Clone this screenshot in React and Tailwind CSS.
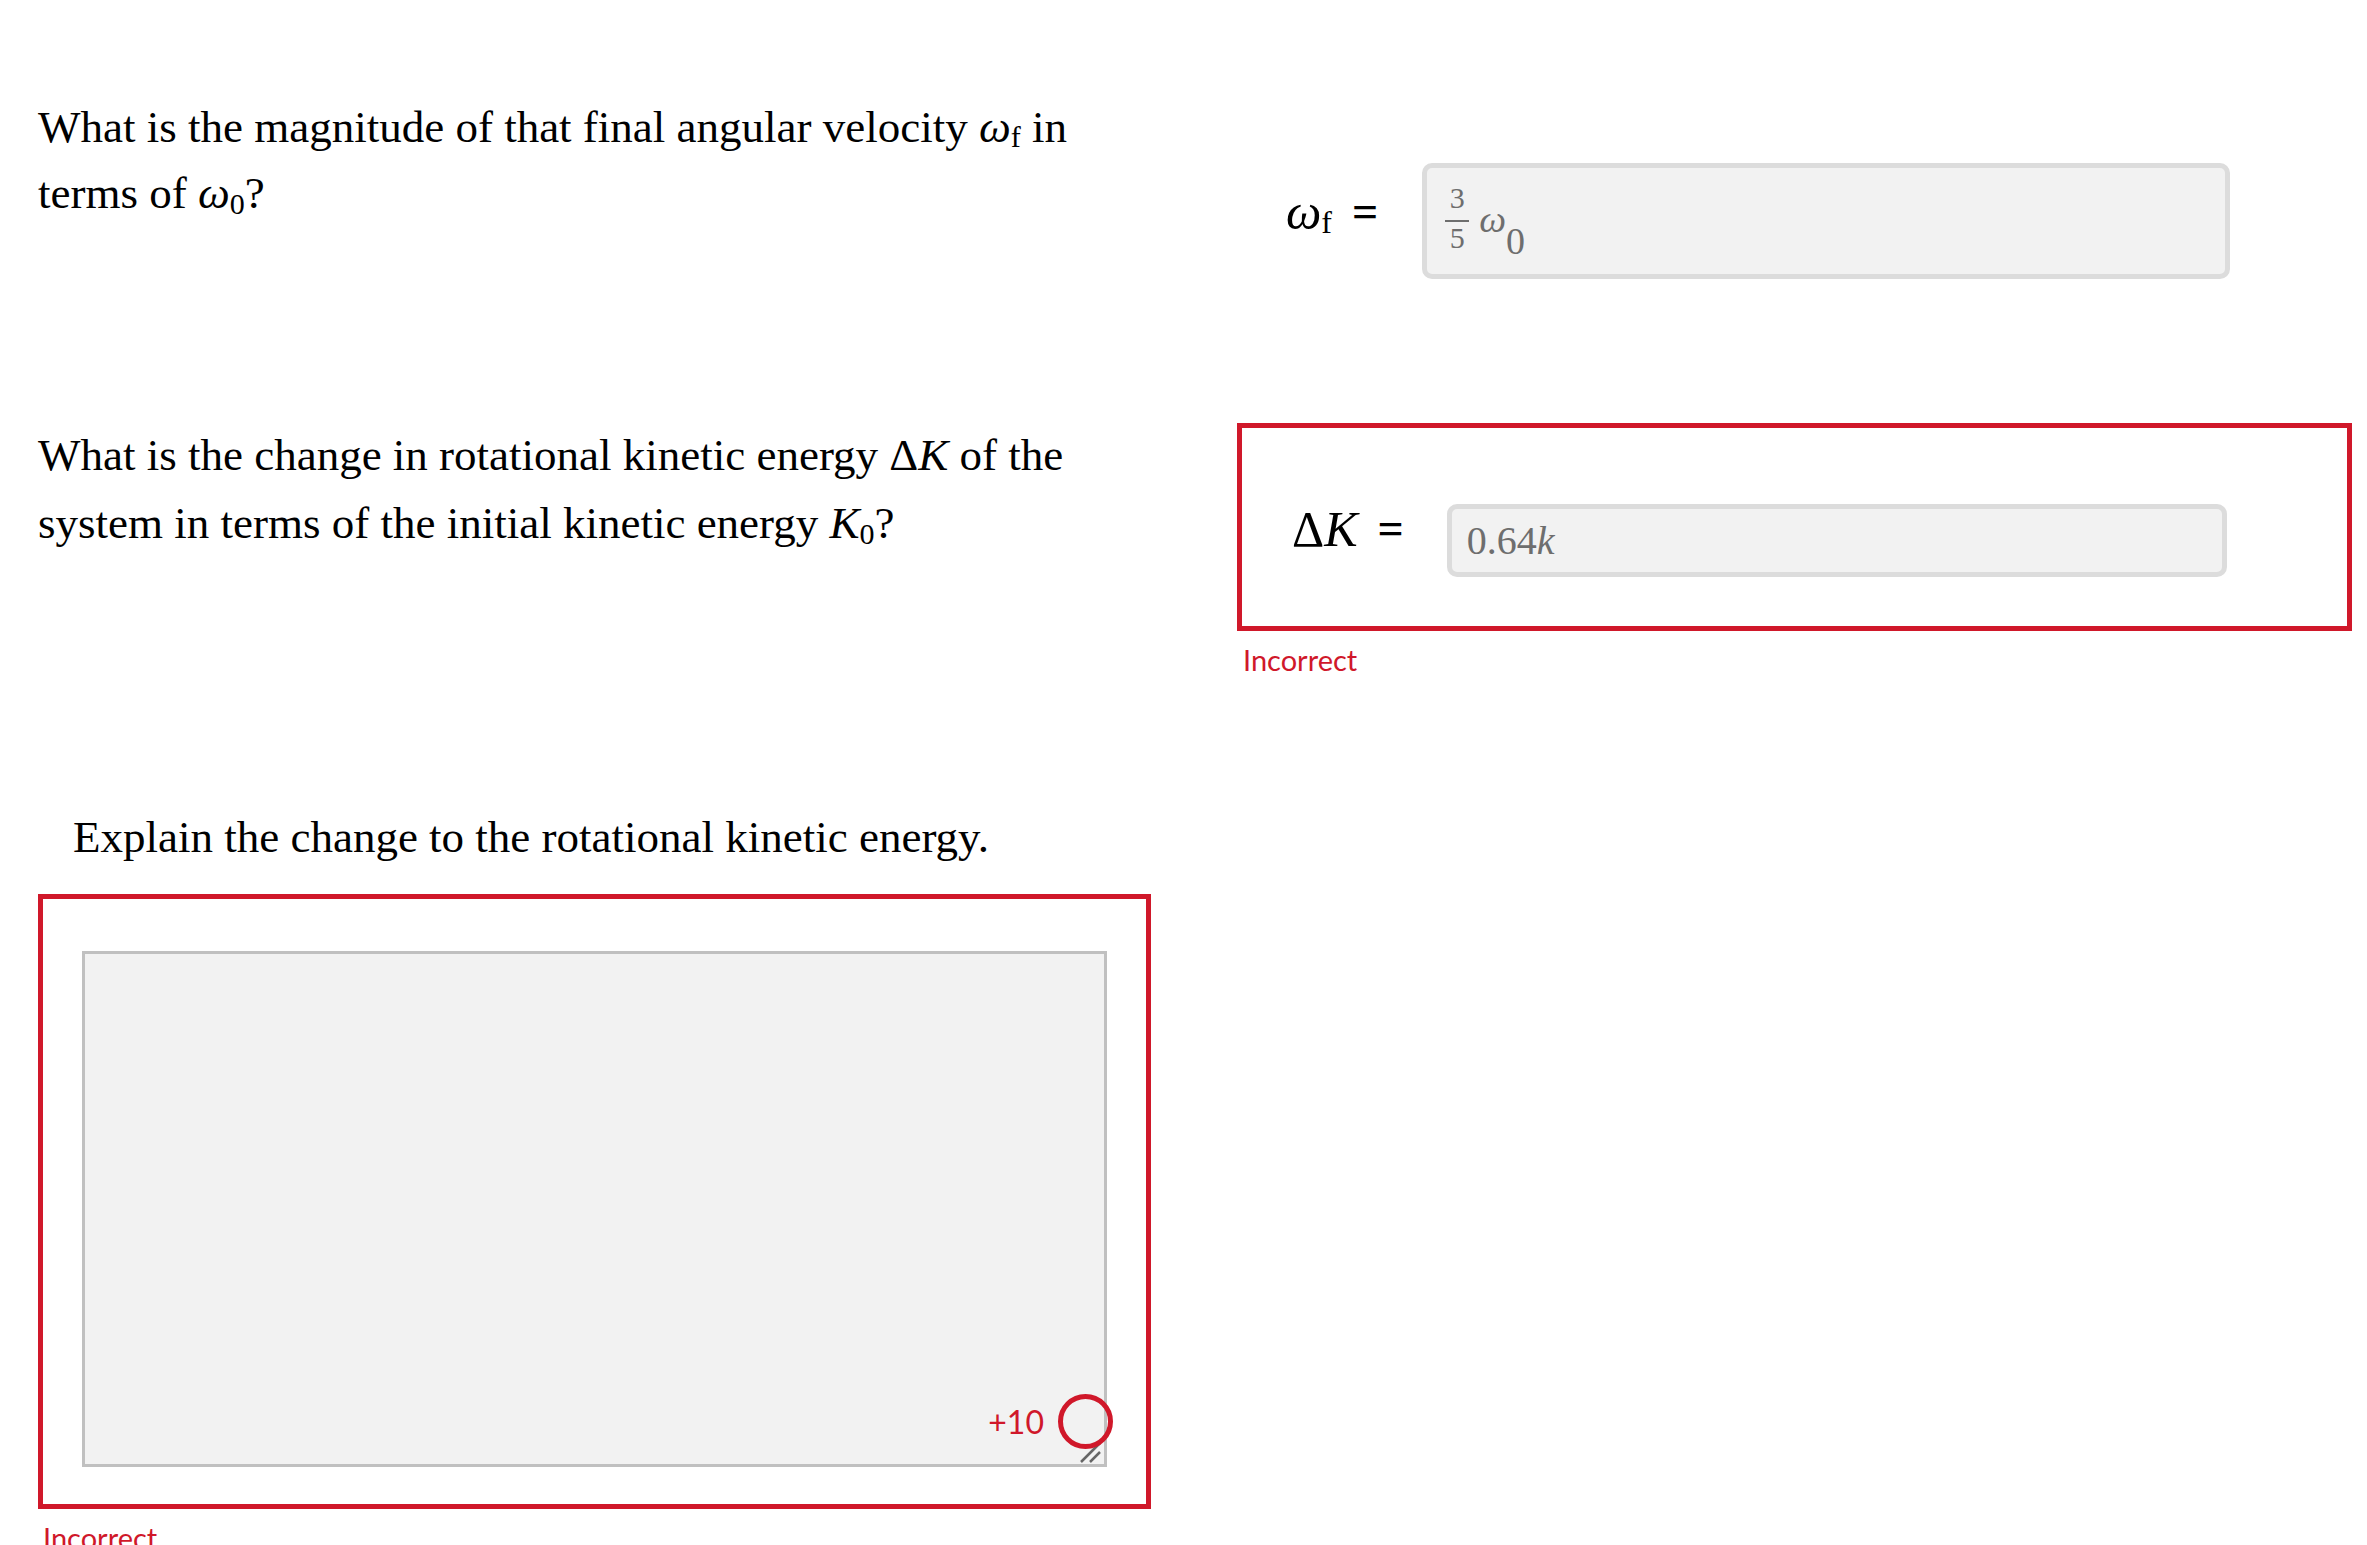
import React from 'react'

const RED = 'border-[#d0182a]'

function Incorrect({ className = '' }) {
    return (
        <div className={`mt-[11px] text-[29px] leading-[36px] text-[#d0182a] font-['Lato',sans-serif] ${className}`}>
            Incorrect
        </div>
    )
}

function MathLabel({ children }) {
    return (
        <div className="shrink-0 flex items-center gap-[20px] text-[50px] leading-none">
            {children}
            <span className="text-[46px] font-bold">=</span>
        </div>
    )
}

export default function App() {
    return (
        <div className="min-h-screen bg-white text-black font-['Liberation_Serif','Times_New_Roman',serif] pl-[38px] pt-[93px] pb-[40px]">
            {/* Question 1 */}
            <div className="flex items-start">
                <p className="w-[1199px] shrink-0 text-[45px] leading-[68px]">
                    What is the magnitude of that final angular velocity <i>ω</i><span className="text-[30px] leading-none relative top-[5px]">f</span> in
                    <br />
                    <span className="relative -top-[2px]">terms of <i>ω</i><span className="text-[30px] leading-none relative top-[6px]">0</span>?</span>
                </p>
                <div className="mt-[65px] w-[1115px] border-[5px] border-transparent pl-[44px] pr-[117px] flex items-center gap-[44px]">
                    <div className="-mt-[18px]">
                        <MathLabel>
                            <span><i>ω</i><span className="text-[32px] relative top-[4px]">f</span></span>
                        </MathLabel>
                    </div>
                    <div className="flex-1 h-[116px] rounded-[10px] border-[5px] border-[#dcdcdc] bg-[#f2f2f2] flex items-center pl-[18px] text-[#6e6e6e]">
                        <span className="inline-flex flex-col items-center text-[30px] leading-[32px] mb-[6px]">
                            <span className="pb-[6px]">3</span>
                            <span className="h-[2px] w-[24px] bg-[#6e6e6e]" />
                            <span>5</span>
                        </span>
                        <i className="text-[38px] ml-[10px] -mt-[4px]">ω</i>
                        <span className="text-[38px] mt-[40px]">0</span>
                    </div>
                </div>
            </div>

            {/* Question 2 */}
            <div className="flex items-start mt-[139px]">
                <p className="w-[1199px] shrink-0 text-[45px] leading-[68px] -mt-[2px]">
                    What is the change in rotational kinetic energy Δ<i>K</i> of the
                    <br />
                    system in terms of the initial kinetic energy <i>K</i><span className="text-[30px] leading-none relative top-[6px]">0</span>?
                </p>
                <div>
                    <div className={`w-[1115px] h-[208px] border-[5px] ${RED} pl-[50px] pr-[120px] pt-[76px] flex items-start gap-[43px]`}>
                        <MathLabel>
                            <span>Δ<i>K</i></span>
                        </MathLabel>
                        <div className="flex-1 h-[73px] rounded-[10px] border-[5px] border-[#dcdcdc] bg-[#f2f2f2] flex items-center pl-[15px] text-[40px] text-[#6e6e6e]">
                            <span>0.64<i>k</i></span>
                        </div>
                    </div>
                    <Incorrect className="pl-[6px]" />
                </div>
            </div>

            {/* Explain */}
            <p className="mt-[125px] pl-[35px] text-[45px] leading-[68px]">
                Explain the change to the rotational kinetic energy.
            </p>
            <div className={`mt-[23px] w-[1113px] h-[615px] border-[5px] ${RED} pl-[39px] pt-[52px]`}>
                <div className="relative w-[1025px] h-[516px] border-[3px] border-[#c0c0c0] bg-[#f2f2f2]">
                    <svg className="absolute right-[3px] bottom-[1px]" width="22" height="22" viewBox="0 0 22 22">
                        <line x1="2" y1="21" x2="21" y2="2" stroke="#666" strokeWidth="2.5" />
                        <line x1="11" y1="21" x2="21" y2="11" stroke="#666" strokeWidth="2.5" />
                    </svg>
                    <div className="absolute right-[-9px] bottom-[15px] flex items-center gap-[14px]">
                        <span className="text-[32px] leading-none text-[#d0182a] font-['Lato',sans-serif]">+10</span>
                        <span className={`w-[55px] h-[55px] rounded-full border-[5px] ${RED}`} />
                    </div>
                </div>
            </div>
            <Incorrect className="pl-[5px]" />
        </div>
    )
}
